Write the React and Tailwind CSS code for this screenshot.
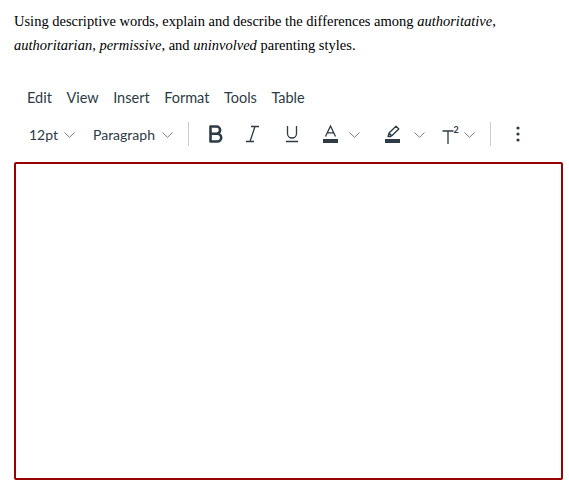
import React from "react";

const ink = "#2d3b45";

function Chevron({ className = "" }) {
  return (
    <svg width="11" height="6" viewBox="0 0 11 6" className={className} fill="none" stroke="#73818c" strokeWidth="1">
      <path d="M0.5 0.5 L5.5 5.3 L10.5 0.5" />
    </svg>
  );
}

function Sep() {
  return <div className="w-px h-[24px] bg-[#c7cdd1]" />;
}

export default function App() {
  return (
    <div className="w-[569px] h-[495px] bg-white relative">
      <p
        className="pt-[9px] pl-[14px] pr-[10px] text-[14.5px] leading-[24px] text-black"
        style={{ fontFamily: '"Liberation Serif", "Times New Roman", serif' }}
      >
        Using descriptive words, explain and describe the differences among <em>authoritative</em>,{" "}
        <em>authoritarian, permissive</em>, and <em>uninvolved</em> parenting styles.
      </p>

      <div
        className="mt-[29px] flex items-center h-[24px] pl-[27px] gap-[14.5px] text-[14.5px] text-[#2d3b45]"
        style={{ fontFamily: 'Lato, "Open Sans", sans-serif' }}
      >
        <span>Edit</span>
        <span>View</span>
        <span>Insert</span>
        <span>Format</span>
        <span>Tools</span>
        <span>Table</span>
      </div>

      <div
        className="mt-[11px] flex items-center h-[26px] text-[14px] text-[#2d3b45]"
        style={{ fontFamily: 'Lato, "Open Sans", sans-serif' }}
      >
        <div className="flex items-center pl-[29px] w-[93px]">
          <span>12pt</span>
          <Chevron className="ml-[6px] mt-[2px]" />
        </div>
        <div className="flex items-center w-[95px]">
          <span>Paragraph</span>
          <Chevron className="ml-[7px] mt-[2px]" />
        </div>
        <Sep />
        {/* bold */}
        <svg width="16" height="18" viewBox="0 0 16 18" className="ml-[19px]" fill="none" stroke={ink} strokeWidth="2.6" strokeLinejoin="round">
          <path d="M2.5 1.5 H8.5 A3.6 3.6 0 0 1 8.5 8.7 H2.5 Z M2.5 8.7 H9.3 A3.9 3.9 0 0 1 9.3 16.5 H2.5 Z" />
        </svg>
        {/* italic */}
        <svg width="15" height="18" viewBox="0 0 15 18" className="ml-[21px]" fill="none" stroke={ink} strokeWidth="1.3">
          <path d="M6 1.5 H14 M1 16.5 H9 M10 1.5 L5 16.5" />
        </svg>
        {/* underline */}
        <svg width="14" height="18" viewBox="0 0 14 18" className="ml-[25px]" fill="none" stroke={ink} strokeWidth="1.3">
          <path d="M2.5 1 V8.5 A4.5 4.5 0 0 0 11.5 8.5 V1 M1 16.5 H13" />
        </svg>
        {/* text colour */}
        <svg width="15" height="18" viewBox="0 0 15 18" className="ml-[24px]" fill="none" stroke={ink} strokeWidth="1.3">
          <path d="M2.5 11.5 L7.5 1 L12.5 11.5 M4.3 7.8 H10.7" />
          <rect x="0" y="14" width="15" height="4" fill={ink} stroke="none" />
        </svg>
        <Chevron className="ml-[11px] mt-[2px]" />
        {/* highlight */}
        <svg width="16" height="18" viewBox="0 0 16 18" className="ml-[25px]" fill="none" stroke={ink} strokeWidth="1.3" strokeLinejoin="round">
          <path d="M3 11.5 L4 8 L11 1.2 L13.8 4 L6.8 10.8 Z M4 8 L6.8 10.8 M3 11.5 H6.2" />
          <rect x="0" y="14" width="15" height="4" fill={ink} stroke="none" />
        </svg>
        <Chevron className="ml-[13px] mt-[2px]" />
        {/* superscript */}
        <svg width="18" height="20" viewBox="0 0 18 20" className="ml-[17px] mt-[1px]" fill="none" stroke={ink} strokeWidth="1.3">
          <path d="M0.5 6 H11.5 M6 6 V19" />
          <text x="11.6" y="8" fontSize="9" fontWeight="700" fill={ink} stroke="none" fontFamily="Lato, sans-serif">2</text>
        </svg>
        <Chevron className="ml-[4px] mt-[2px]" />
        <div className="ml-[15px]">
          <Sep />
        </div>
        <svg width="4" height="16" viewBox="0 0 4 16" className="ml-[25px]" fill={ink}>
          <circle cx="2" cy="2" r="1.6" />
          <circle cx="2" cy="8" r="1.6" />
          <circle cx="2" cy="14" r="1.6" />
        </svg>
      </div>

      <div className="mt-[15px] ml-[14px] w-[549px] h-[318px] border-2 border-[#990000] rounded-[2px]" />
    </div>
  );
}
